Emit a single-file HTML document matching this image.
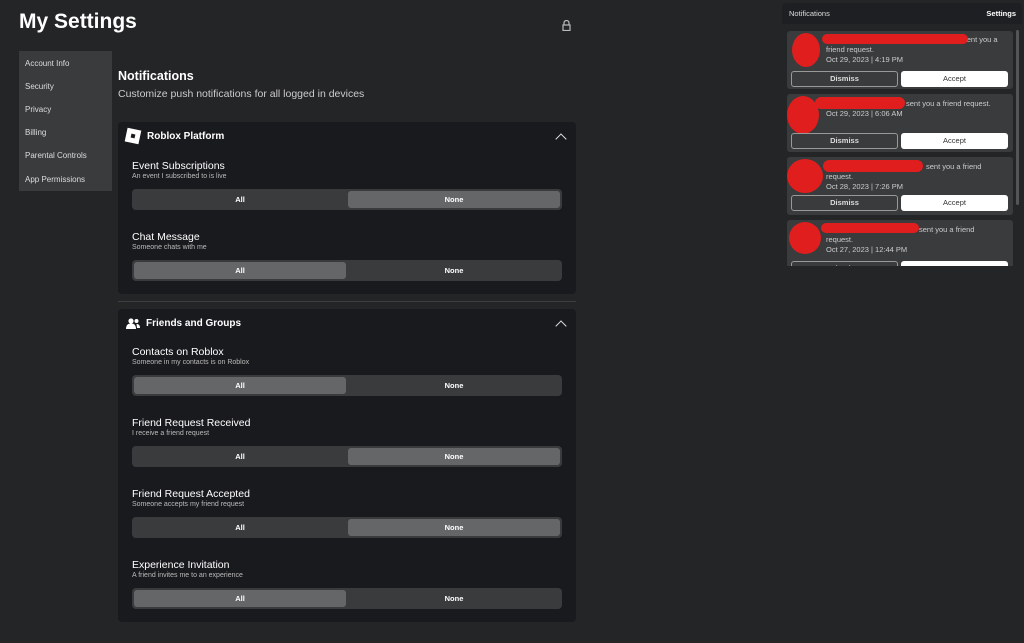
<!DOCTYPE html>
<html><head><style>
*{margin:0;padding:0;box-sizing:border-box}
body{width:1024px;height:643px;background:#232527;font-family:"Liberation Sans",sans-serif;color:#fff;position:relative;overflow:hidden}
.a{position:absolute}
h1{position:absolute;left:19px;top:10px;font-size:21px;font-weight:bold}
.side{left:19px;top:51px;width:93px;height:140px;background:#393b3d}
.side div{position:absolute;left:6px;font-size:8px;color:#ddd}
.card{background:#191a1e;border-radius:4px;left:118px;width:458px}
.t{font-size:10.5px;color:#fff}
.d{font-size:7px;color:#bbb}
.tg{position:absolute;left:132px;width:430px;height:21px;background:#393b3d;border-radius:4px}
.tg span{position:absolute;top:2px;width:212px;height:17px;border-radius:3px;font-size:7.5px;font-weight:bold;text-align:center;line-height:17px}
.tg .l{left:2px}.tg .r{right:2px}
.on{background:#656668}
.chev{position:absolute;width:8px;height:8px;border-left:1.5px solid #ddd;border-top:1.5px solid #ddd;transform:rotate(45deg)}
.pop{left:782px;top:3px;width:240px;height:263px;background:#1e1f22;border-radius:4px;overflow:hidden}
.nc{position:absolute;left:5px;width:226px;height:58px;background:#393b3d;border-radius:3px;overflow:hidden}
.nc .tx{position:absolute;left:39px;font-size:7.5px;color:#ccc;line-height:10px}
.blob{position:absolute;background:#e01e1e;border-radius:50%}
.bar{position:absolute;background:#e01e1e;border-radius:6px;height:10px}
.bd{position:absolute;left:4px;width:107px;height:16px;border:1px solid #999;border-radius:3px;font-size:7.5px;font-weight:bold;text-align:center;line-height:14px;color:#ddd}
.ba{position:absolute;left:114px;width:107px;height:16px;background:#fff;border-radius:3px;font-size:7.5px;text-align:center;line-height:16px;color:#333}
</style></head><body>
<h1>My Settings</h1>
<svg class="a" style="left:562px;top:20px" width="9" height="11" viewBox="0 0 9 11"><path d="M2 5V3a2.5 2.5 0 015 0v2" fill="none" stroke="#bbb" stroke-width="1.2"/><rect x="1" y="5" width="7" height="5.5" fill="none" stroke="#bbb" stroke-width="1.2"/></svg>
<div class="a side">
<div style="top:8px">Account Info</div><div style="top:31px">Security</div><div style="top:54px">Privacy</div><div style="top:77px">Billing</div><div style="top:100px">Parental Controls</div><div style="top:124px">App Permissions</div>
</div>
<div class="a" style="left:118px;top:69px;font-size:12.5px;font-weight:bold">Notifications</div>
<div class="a" style="left:118px;top:88px;font-size:10.5px;color:#ccc">Customize push notifications for all logged in devices</div>

<div class="a card" style="top:122px;height:172px"></div>
<div class="a" style="left:126px;top:129px;width:14px;height:14px;background:#fff;transform:rotate(12deg)"><div style="position:absolute;left:5px;top:5px;width:4px;height:4px;background:#191a1e"></div></div>
<div class="a" style="left:147px;top:131px;font-size:10px;font-weight:bold">Roblox Platform</div>
<div class="chev" style="left:557px;top:135px"></div>
<div class="a t" style="left:132px;top:160px">Event Subscriptions</div><div class="a d" style="left:132px;top:173px">An event I subscribed to is live</div>
<div class="tg" style="top:189px"><span class="l">All</span><span class="r on">None</span></div>
<div class="a t" style="left:132px;top:231px">Chat Message</div><div class="a d" style="left:132px;top:244px">Someone chats with me</div>
<div class="tg" style="top:260px"><span class="l on">All</span><span class="r">None</span></div>

<div class="a" style="left:118px;top:301px;width:458px;height:1px;background:#3c3e41"></div>

<div class="a card" style="top:309px;height:313px"></div>
<svg class="a" style="left:126px;top:318px" width="14" height="12" viewBox="0 0 14 12"><circle cx="5" cy="3" r="2.6" fill="#fff"/><path d="M0 11c0-4 2-5.5 5-5.5s5 1.5 5 5.5z" fill="#fff"/><circle cx="10.5" cy="3" r="2" fill="#fff"/><path d="M10.5 6c2 0 3.5 1 3.5 4h-3z" fill="#fff"/></svg>
<div class="a" style="left:146px;top:318px;font-size:10px;font-weight:bold">Friends and Groups</div>
<div class="chev" style="left:557px;top:322px"></div>
<div class="a t" style="left:132px;top:346px">Contacts on Roblox</div><div class="a d" style="left:132px;top:359px">Someone in my contacts is on Roblox</div>
<div class="tg" style="top:375px"><span class="l on">All</span><span class="r">None</span></div>
<div class="a t" style="left:132px;top:417px">Friend Request Received</div><div class="a d" style="left:132px;top:430px">I receive a friend request</div>
<div class="tg" style="top:446px"><span class="l">All</span><span class="r on">None</span></div>
<div class="a t" style="left:132px;top:488px">Friend Request Accepted</div><div class="a d" style="left:132px;top:501px">Someone accepts my friend request</div>
<div class="tg" style="top:517px"><span class="l">All</span><span class="r on">None</span></div>
<div class="a t" style="left:132px;top:559px">Experience Invitation</div><div class="a d" style="left:132px;top:572px">A friend invites me to an experience</div>
<div class="tg" style="top:588px"><span class="l on">All</span><span class="r">None</span></div>

<div class="a pop">
<div class="a" style="left:7px;top:6px;font-size:7.5px;color:#ddd">Notifications</div>
<div class="a" style="right:6px;top:6px;font-size:7.5px;font-weight:bold">Settings</div>
<div class="a" style="left:0;top:21px;width:240px;height:242px;background:#232527"></div>
<div class="a" style="left:234px;top:27px;width:3px;height:175px;background:#555;border-radius:2px"></div>
<div class="nc" style="top:28px">
<div class="tx" style="top:4px;left:39px;width:180px"><span style="margin-left:137px">sent you a</span><br>friend request.<br>Oct 29, 2023 | 4:19 PM</div>
<div class="blob" style="left:5px;top:2px;width:28px;height:34px"></div><div class="bar" style="left:35px;top:3px;width:146px"></div>
<div class="bd" style="top:40px">Dismiss</div><div class="ba" style="top:40px">Accept</div></div>
<div class="nc" style="top:91px">
<div class="tx" style="top:5px;width:185px"><span style="margin-left:80px">sent you a friend request.</span><br>Oct 29, 2023 | 6:06 AM</div>
<div class="blob" style="left:0;top:2px;width:32px;height:38px"></div><div class="bar" style="left:28px;top:3px;width:90px;height:12px"></div>
<div class="bd" style="top:39px">Dismiss</div><div class="ba" style="top:39px">Accept</div></div>
<div class="nc" style="top:154px">
<div class="tx" style="top:5px;width:185px"><span style="margin-left:100px">sent you a friend</span><br>request.<br>Oct 28, 2023 | 7:26 PM</div>
<div class="blob" style="left:0;top:2px;width:36px;height:34px"></div><div class="bar" style="left:36px;top:3px;width:100px;height:12px"></div>
<div class="bd" style="top:38px">Dismiss</div><div class="ba" style="top:38px">Accept</div></div>
<div class="nc" style="top:217px">
<div class="tx" style="top:5px;width:185px"><span style="margin-left:93px">sent you a friend</span><br>request.<br>Oct 27, 2023 | 12:44 PM</div>
<div class="blob" style="left:2px;top:2px;width:32px;height:32px"></div><div class="bar" style="left:34px;top:3px;width:98px;height:10px"></div>
<div class="bd" style="top:41px">Dismiss</div><div class="ba" style="top:41px">Accept</div></div>
</div>
</body></html>
